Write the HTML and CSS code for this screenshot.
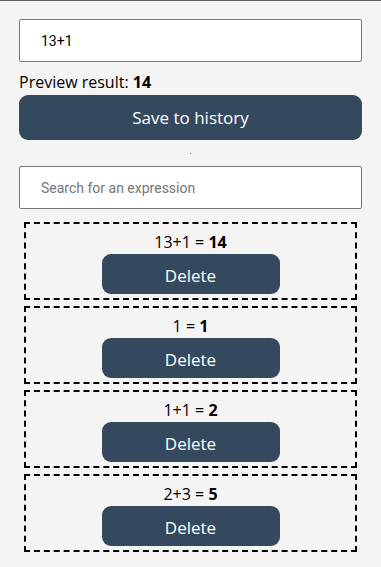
FILE: index.html
```html
<!DOCTYPE html>
<html lang="en">
<head>
    <meta charset="UTF-8">
    <meta name="viewport" content="width=device-width, initial-scale=1.0">
    <title>Calculator History</title>
    <link rel="stylesheet" href="styles.css">
</head>
<body>
    <div class="app">
        <input class="field expression" type="text" value="13+1">
        <p class="preview">Preview result: <strong>14</strong></p>
        <button class="btn save">Save to history</button>
        <div class="divider"><span class="dot"></span></div>
        <input class="field search" type="text" placeholder="Search for an expression">
        <ul class="history">
            <li class="item">
                <p class="item-text">13+1 = <strong>14</strong></p>
                <button class="btn delete">Delete</button>
            </li>
            <li class="item">
                <p class="item-text">1 = <strong>1</strong></p>
                <button class="btn delete">Delete</button>
            </li>
            <li class="item">
                <p class="item-text">1+1 = <strong>2</strong></p>
                <button class="btn delete">Delete</button>
            </li>
            <li class="item">
                <p class="item-text">2+3 = <strong>5</strong></p>
                <button class="btn delete">Delete</button>
            </li>
        </ul>
    </div>
</body>
</html>
```

FILE: styles.css
```css
body {
    margin: 0;
    background: #f4f4f4;
    font-family: "Open Sans", sans-serif;
    color: black;
}
.app {
    border-top: 1px solid #606060;
    padding: 18px 19px 10px;
}
.field {
    display: block;
    box-sizing: border-box;
    width: 100%;
    height: 43px;
    margin: 0;
    padding: 0 21px;
    border: 1px solid #767676;
    border-radius: 2px;
    background: white;
    font-family: Roboto, sans-serif;
    font-size: 14px;
    color: black;
}
.field::placeholder {
    color: #757575;
}
.preview {
    margin: 8px 0 1px;
    font-size: 16px;
    line-height: 24px;
}
.btn {
    display: block;
    border: none;
    background: #34495e;
    color: white;
    font-family: "Open Sans", sans-serif;
    cursor: pointer;
}
.save {
    width: 100%;
    height: 45px;
    border-radius: 9px;
    font-size: 17px;
}
.divider {
    height: 26px;
    display: flex;
    justify-content: center;
    align-items: center;
}
.dot {
    width: 1px;
    height: 1px;
    background: #888;
}
.history {
    list-style: none;
    margin: 13px 5px 0;
    padding: 0;
}
.item {
    border: 2px dashed black;
    padding: 6px 0 4px;
    margin-bottom: 6px;
    text-align: center;
}
.item-text {
    margin: 0;
    font-size: 16px;
    line-height: 24px;
}
.delete {
    width: 178px;
    height: 40px;
    margin: 0 auto;
    padding-top: 3px;
    border-radius: 9px;
    font-size: 17px;
}
```
